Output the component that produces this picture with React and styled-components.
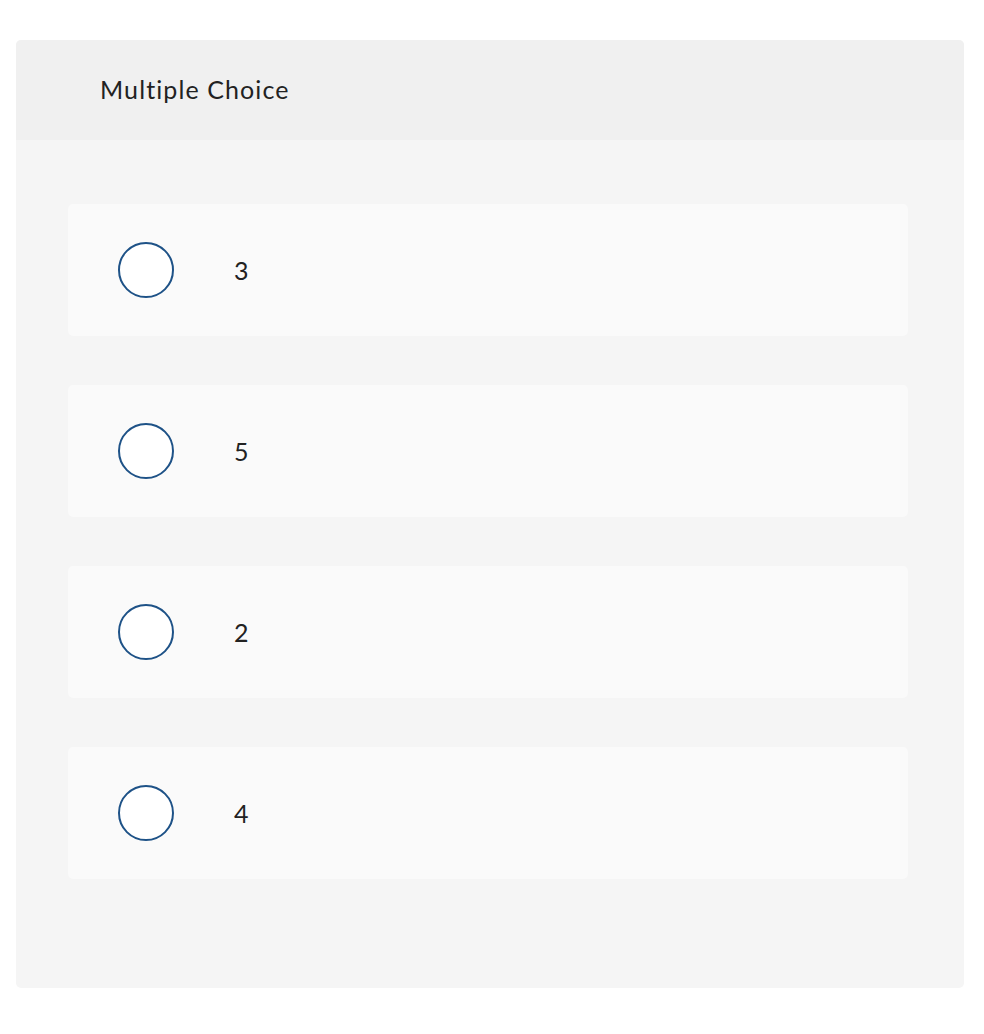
import React from 'react';
import styled, { createGlobalStyle } from 'styled-components';

const GlobalStyle = createGlobalStyle`
  body {
    margin: 0;
    background: #ffffff;
    font-family: Lato, "Open Sans", Arial, sans-serif;
    color: #222222;
  }
`;

const Page = styled.div`
  padding: 40px 20px 46px 16px;
`;

const Panel = styled.div`
  width: 948px;
  border-radius: 5px;
  overflow: hidden;
  background: #f5f5f5;
`;

const Header = styled.div`
  height: 100px;
  box-sizing: border-box;
  display: flex;
  align-items: center;
  padding: 0 0 2px 84px;
  background: #f0f0f0;
  font-size: 25px;
  letter-spacing: 1.1px;
  color: #222222;
`;

const Body = styled.div`
  display: flex;
  flex-direction: column;
  gap: 49px;
  padding: 64px 56px 109px 52px;
`;

const Choice = styled.label`
  height: 132px;
  display: flex;
  align-items: center;
  padding-left: 50px;
  background: #fafafa;
  border-radius: 5px;
  cursor: pointer;
`;

const Radio = styled.span`
  width: 56px;
  height: 56px;
  box-sizing: border-box;
  border-radius: 50%;
  border: 2px solid #1e5287;
  background: #ffffff;
  flex-shrink: 0;
`;

const ChoiceText = styled.span`
  margin-left: 60px;
  font-size: 25px;
  color: #222222;
`;

const choices = ['3', '5', '2', '4'];

export default function App() {
  return (
    <>
      <GlobalStyle />
      <Page>
        <Panel>
          <Header>Multiple Choice</Header>
          <Body>
            {choices.map((c, i) => (
              <Choice key={i}>
                <Radio />
                <ChoiceText>{c}</ChoiceText>
              </Choice>
            ))}
          </Body>
        </Panel>
      </Page>
    </>
  );
}
